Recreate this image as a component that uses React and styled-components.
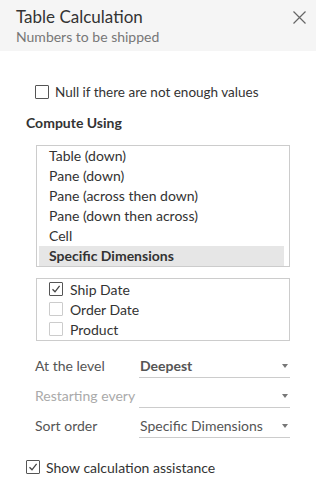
import React from 'react';
import styled, { createGlobalStyle } from 'styled-components';

const GlobalStyle = createGlobalStyle`
	html, body {
		margin: 0;
		padding: 0;
		background: #fff;
	}
	body {
		font-family: 'Lato', 'Roboto', sans-serif;
		color: #333;
	}
`;

const computeOptions = [
	'Table (down)',
	'Pane (down)',
	'Pane (across then down)',
	'Pane (down then across)',
	'Cell',
	'Specific Dimensions',
];

const dimensions = [
	{ name: 'Ship Date', checked: true },
	{ name: 'Order Date', checked: false },
	{ name: 'Product', checked: false },
];

const fields = [
	{ label: 'At the level', value: 'Deepest', bold: true },
	{ label: 'Restarting every', value: '', disabled: true },
	{ label: 'Sort order', value: 'Specific Dimensions' },
];

const Check = ({ checked, light }) => (
	<Box $light={light}>
		{checked && (
			<svg width='10' height='10' viewBox='0 0 10 10'>
				<path d='M1.5 5.2 L4 7.8 L8.6 1.8' fill='none' stroke='#444' strokeWidth='1.3' />
			</svg>
		)}
	</Box>
);

const App = () => {
	return (
		<Panel>
			<GlobalStyle />
			<Header>
				<div>
					<Title>Table Calculation</Title>
					<Subtitle>Numbers to be shipped</Subtitle>
				</div>
				<Close>
					<svg width='13' height='13' viewBox='0 0 13 13'>
						<path d='M0.5 0.5 L12.5 12.5 M12.5 0.5 L0.5 12.5' stroke='#666' strokeWidth='1.2' />
					</svg>
				</Close>
			</Header>
			<Body>
				<CheckRow $indent={35}>
					<Check />
					<NullText>Null if there are not enough values</NullText>
				</CheckRow>
				<SectionTitle>Compute Using</SectionTitle>
				<ListBox>
					{computeOptions.map((opt, i) => (
						<ListItem key={opt} $selected={i === computeOptions.length - 1}>
							{opt}
						</ListItem>
					))}
				</ListBox>
				<DimBox>
					{dimensions.map((d) => (
						<DimItem key={d.name}>
							<Check checked={d.checked} light={!d.checked} />
							<span>{d.name}</span>
						</DimItem>
					))}
				</DimBox>
				<Fields>
					{fields.map((f) => (
						<FieldRow key={f.label} $disabled={f.disabled}>
							<FieldLabel>{f.label}</FieldLabel>
							<Select $bold={f.bold}>
								<span>{f.value}</span>
								<Caret />
							</Select>
						</FieldRow>
					))}
				</Fields>
				<CheckRow $indent={26} $top={19}>
					<Check checked />
					<span>Show calculation assistance</span>
				</CheckRow>
			</Body>
		</Panel>
	);
};

const Panel = styled.div`
	width: 316px;
	height: 503px;
	background: #fff;
	font-size: 14px;
`;

const Header = styled.div`
	height: 51px;
	box-sizing: border-box;
	background: #f5f5f5;
	padding: 6px 10px 0 16px;
	display: flex;
	justify-content: space-between;
	align-items: flex-start;
`;

const Title = styled.div`
	font-size: 17px;
	line-height: 21px;
	color: #333;
`;

const Subtitle = styled.div`
	font-size: 14px;
	line-height: 17px;
	margin-top: 1px;
	color: #777;
`;

const Close = styled.div`
	padding-top: 5px;
	display: flex;
`;

const Body = styled.div`
	padding-top: 34px;
`;

const CheckRow = styled.label`
	display: flex;
	align-items: center;
	gap: 6px;
	padding-left: ${(p) => p.$indent}px;
	margin-top: ${(p) => p.$top || 0}px;
	height: 14px;
	color: #333;
`;

const NullText = styled.span`
	font-size: 13.5px;
`;

const Box = styled.span`
	width: 14px;
	height: 14px;
	box-sizing: border-box;
	border: 1px solid ${(p) => (p.$light ? '#ccc' : '#555')};
	border-radius: 1px;
	background: #fff;
	display: flex;
	align-items: center;
	justify-content: center;
	flex-shrink: 0;
`;

const SectionTitle = styled.div`
	font-weight: bold;
	margin: 16px 0 0 26px;
	line-height: 16px;
	color: #333;
`;

const ListBox = styled.div`
	margin: 14px 0 0 36px;
	width: 254px;
	box-sizing: border-box;
	border: 1px solid #ccc;
	padding: 0 5px 0 2px;
	height: 122px;
`;

const ListItem = styled.div`
	height: 20px;
	line-height: 20px;
	padding-left: 10px;
	color: #333;
	font-weight: ${(p) => (p.$selected ? 'bold' : 'normal')};
	background: ${(p) => (p.$selected ? '#e6e6e6' : 'transparent')};
`;

const DimBox = styled.div`
	margin: 11px 0 0 36px;
	width: 254px;
	box-sizing: border-box;
	border: 1px solid #ccc;
	padding: 0 0 0 12px;
	height: 63px;
`;

const DimItem = styled.div`
	height: 20px;
	display: flex;
	align-items: center;
	gap: 7px;
	color: #333;
`;

const Fields = styled.div`
	margin-top: 10px;
	padding-left: 35px;
`;

const FieldRow = styled.div`
	display: flex;
	align-items: stretch;
	height: 30px;
	color: ${(p) => (p.$disabled ? '#aaa' : '#555')};
`;

const FieldLabel = styled.div`
	width: 104px;
	line-height: 29px;
`;

const Select = styled.div`
	width: 151px;
	box-sizing: border-box;
	border-bottom: 1px solid #ccc;
	display: flex;
	align-items: center;
	justify-content: space-between;
	padding: 0 2px 0 1px;
	font-weight: ${(p) => (p.$bold ? 'bold' : 'normal')};
	color: inherit;
	height: 24px;
	margin-top: 3px;
`;

const Caret = styled.span`
	width: 0;
	height: 0;
	border-left: 3.5px solid transparent;
	border-right: 3.5px solid transparent;
	border-top: 4px solid #777;
`;

export default App;
